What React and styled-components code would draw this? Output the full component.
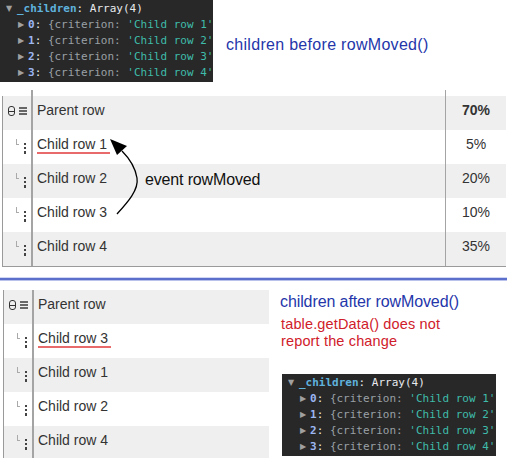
import React from "react";
import styled, { createGlobalStyle } from "styled-components";

const Global = createGlobalStyle`
  html, body { margin: 0; padding: 0; background: #fff; }
  body { font-family: "Liberation Sans", Arial, sans-serif; }
`;

const Page = styled.div`
  width: 507px;
  height: 458px;
  overflow: hidden;
  background: #fff;
`;

const TopSection = styled.div`
  display: flex;
  height: 90px;
`;

const Console = styled.div`
  width: ${(p) => p.$w}px;
  height: 82px;
  flex: none;
  background: #282828;
  overflow: hidden;
  padding-top: 1px;
  box-sizing: border-box;
  font-family: "DejaVu Sans Mono", monospace;
  font-size: 11px;
  line-height: 16px;
  white-space: nowrap;
  color: #e8eaed;
  margin-left: ${(p) => p.$ml || 0}px;
  margin-top: ${(p) => p.$mt || 0}px;
`;

const ConsoleLine = styled.div`
  display: flex;
  padding-left: ${(p) => (p.$child ? 18 : 6)}px;
`;

const Toggle = styled.span`
  width: ${(p) => (p.$child ? 10 : 11)}px;
  flex: none;
  color: #a0a0a0;
  font-size: 8px;
  font-family: "DejaVu Sans", sans-serif;
`;

const Key = styled.span`
  color: #5fb2dc;
  font-weight: bold;
`;
const Index = styled.span`
  color: #9cb6f2;
  font-weight: bold;
`;
const Punct = styled.span`
  color: #e8eaed;
`;
const Dim = styled.span`
  color: #9aa0a6;
`;
const Str = styled.span`
  color: #3fbcaa;
`;

const BlueCaption = styled.div`
  color: #2436aa;
  font-size: 16px;
  line-height: 18px;
  letter-spacing: ${(p) => (p.$wide ? "0.3px" : "-0.1px")};
  margin-top: ${(p) => p.$mt || 0}px;
  margin-left: ${(p) => p.$ml || 0}px;
`;

const RedNote = styled.div`
  color: #d0202a;
  font-size: 14.5px;
  letter-spacing: 0.15px;
  margin-top: 5px;
  margin-left: 1px;
`;

const NoteLine = styled.div`
  height: 17px;
  line-height: 17px;
  white-space: nowrap;
`;

const TableWrap = styled.div`
  position: relative;
  margin-left: ${(p) => p.$ml}px;
  width: ${(p) => p.$w}px;
  flex: none;
`;

const Table = styled.div`
  border-bottom: ${(p) => (p.$noBottom ? "none" : "1px solid #9a9a9a")};
`;

const Row = styled.div`
  display: flex;
  height: ${(p) => (p.$stub ? 6 : 34)}px;
  background: ${(p) => (p.$alt ? "#efefef" : "#fff")};
  border-left: 1px solid ${(p) => (p.$stub ? "transparent" : "#9a9a9a")};
  box-sizing: border-box;
  color: #333;
  font-size: 14px;
  line-height: 16px;
`;

const HandleCell = styled.div`
  flex: none;
  border-right: 2px solid #a4a4a4;
  display: flex;
  align-items: flex-start;
  padding-left: ${(p) => (p.$parent ? 5 : 13)}px;
  padding-top: ${(p) => (p.$parent ? 14 : 9)}px;
  box-sizing: content-box;
  gap: ${(p) => (p.$parent ? 4 : 5)}px;
  width: ${(p) => (p.$parent ? 23 : 15)}px;
`;

const NameCell = styled.div`
  flex: 1;
  padding: 6px 0 0 4px;
  border-right: ${(p) => (p.$divided ? "1px solid #a4a4a4" : "none")};
  min-width: 0;
`;

const ValueCell = styled.div`
  width: 60px;
  flex: none;
  padding-top: 6px;
  text-align: center;
  font-weight: ${(p) => (p.$bold ? "bold" : "normal")};
`;

const Marked = styled.span`
  display: inline-block;
  border-bottom: 2px solid #e86a6a;
  padding-right: 3px;
`;

const CollapseIcon = styled.span`
  display: block;
  position: relative;
  width: 5px;
  height: 8px;
  border: 1px solid #333;
  border-radius: 3px;
  margin-top: -4px;
  &::after {
    content: "";
    position: absolute;
    left: 0;
    right: 0;
    top: 3.5px;
    height: 1px;
    background: #333;
  }
`;

const MenuIcon = styled.span`
  display: flex;
  flex-direction: column;
  gap: 1px;
  margin-top: -3px;
  & > i {
    display: block;
    width: 8px;
    height: 2px;
    background: #666;
  }
`;

const Branch = styled.span`
  display: block;
  width: 2px;
  height: 5px;
  border-left: 1px solid #aaa;
  border-bottom: 1px solid #aaa;
`;

const Dots = styled.span`
  display: flex;
  flex-direction: column;
  gap: 2px;
  margin-top: 4px;
  & > i {
    display: block;
    width: 2px;
    height: 2px;
    background: #444;
  }
  & > i:last-child {
    height: 3px;
  }
`;

const ArrowSvg = styled.svg`
  position: absolute;
  left: 96px;
  top: 45px;
  width: 45px;
  height: 85px;
  overflow: visible;
`;

const EventLabel = styled.div`
  position: absolute;
  left: 143px;
  top: 81px;
  font-size: 16px;
  line-height: 18px;
  letter-spacing: -0.15px;
  color: #111;
  white-space: nowrap;
`;

const Divider = styled.div`
  height: 2px;
  margin-top: 11px;
  background: #5b6fcb;
  box-shadow: 0 1px 0 #b8c2ea, 0 -1px 0 #d0d7f2;
`;

const BottomSection = styled.div`
  display: flex;
  margin-top: 10px;
`;

const Notes = styled.div`
  display: flex;
  flex-direction: column;
  align-items: flex-start;
  margin-left: 11px;
  padding-top: 3px;
`;

function ConsoleBox({ w, ml, mt }) {
  return (
    <Console $w={w} $ml={ml} $mt={mt}>
      <ConsoleLine>
        <Toggle>▼</Toggle>
        <span>
          <Key>_children</Key>
          <Punct>: Array(4)</Punct>
        </span>
      </ConsoleLine>
      {[0, 1, 2, 3].map((i) => (
        <ConsoleLine $child key={i}>
          <Toggle $child>▶</Toggle>
          <span>
            <Index>{i}</Index>
            <Punct>: </Punct>
            <Dim>{"{criterion: "}</Dim>
            <Str>'Child row {i + 1}'</Str>
          </span>
        </ConsoleLine>
      ))}
    </Console>
  );
}

function ParentHandle() {
  return (
    <HandleCell $parent>
      <CollapseIcon />
      <MenuIcon>
        <i />
        <i />
        <i />
      </MenuIcon>
    </HandleCell>
  );
}

function ChildHandle() {
  return (
    <HandleCell>
      <Branch />
      <Dots>
        <i />
        <i />
        <i />
      </Dots>
    </HandleCell>
  );
}

const before = [
  { name: "Child row 1", val: "5%", marked: true },
  { name: "Child row 2", val: "20%" },
  { name: "Child row 3", val: "10%" },
  { name: "Child row 4", val: "35%" },
];

const after = [
  { name: "Child row 3", marked: true },
  { name: "Child row 1" },
  { name: "Child row 2" },
  { name: "Child row 4" },
];

export default function App() {
  return (
    <Page>
      <Global />
      <TopSection>
        <ConsoleBox w={213} />
        <BlueCaption $mt={36} $ml={13} $wide>
          children before rowMoved()
        </BlueCaption>
      </TopSection>

      <TableWrap $ml={2} $w={504}>
        <Table>
          <Row $stub>
            <HandleCell $parent style={{ paddingTop: 0 }} />
            <NameCell $divided />
            <ValueCell />
          </Row>
          <Row $alt>
            <ParentHandle />
            <NameCell $divided>Parent row</NameCell>
            <ValueCell $bold>70%</ValueCell>
          </Row>
          {before.map((r, i) => (
            <Row key={r.name} $alt={i % 2 === 1}>
              <ChildHandle />
              <NameCell $divided>
                {r.marked ? <Marked>{r.name}</Marked> : r.name}
              </NameCell>
              <ValueCell>{r.val}</ValueCell>
            </Row>
          ))}
        </Table>
        <ArrowSvg viewBox="98 135 45 85">
          <path
            d="M117 214 C127 203, 139 190, 137 178 C135 166, 129 158, 122 151"
            fill="none"
            stroke="#000"
            strokeWidth="1.3"
          />
          <polygon points="110,139 127,146 117,155" fill="#000" />
        </ArrowSvg>
        <EventLabel>event rowMoved</EventLabel>
      </TableWrap>

      <Divider />

      <BottomSection>
        <TableWrap $ml={3} $w={266}>
          <Table $noBottom>
            <Row $alt>
              <ParentHandle />
              <NameCell>Parent row</NameCell>
            </Row>
            {after.map((r, i) => (
              <Row key={r.name} $alt={i % 2 === 1}>
                <ChildHandle />
                <NameCell>{r.marked ? <Marked>{r.name}</Marked> : r.name}</NameCell>
              </Row>
            ))}
          </Table>
        </TableWrap>
        <Notes>
          <BlueCaption>children after rowMoved()</BlueCaption>
          <RedNote>
            <NoteLine>table.getData() does not</NoteLine>
            <NoteLine>report the change</NoteLine>
          </RedNote>
          <ConsoleBox w={214} ml={2} mt={24} />
        </Notes>
      </BottomSection>
    </Page>
  );
}
